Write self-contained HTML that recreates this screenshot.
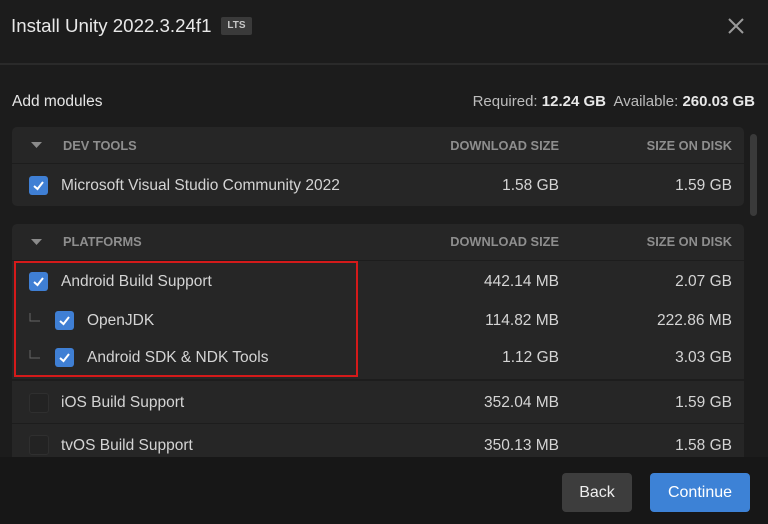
<!DOCTYPE html><html><head><style>
body{margin:0;width:768px;height:524px;background:#1c1c1c;font-family:"Liberation Sans",sans-serif;color:#d6d6d6;position:relative;overflow:hidden}
.a{position:absolute}
.hdr{left:0;top:0;width:768px;height:63px;background:#1c1c1c;border-bottom:2px solid #2a2a2a}
.panel{left:12px;width:732px;background:#262626;border-radius:5px}
.row{position:absolute;left:0;width:732px;border-top:1px solid #1d1d1d}
.h{font-size:12.8px;font-weight:bold;color:#8e8e8e}
.t{font-size:15.5px;color:#d4d4d4}
.cb{position:absolute;width:19px;height:19px;border-radius:3px;background:#3f7fd4}
.cb svg{position:absolute;left:3px;top:3px}
.ecb{position:absolute;width:18px;height:18px;border-radius:3px;border:1px solid #2f2f2f;background:#232323}
.r{position:absolute;text-align:right;font-size:15.5px;color:#d4d4d4}
</style></head><body>
<div class="a hdr"></div>
<div class="a" style="left:11px;top:15px;font-size:18.7px;color:#e8e8e8">Install Unity 2022.3.24f1</div>
<div class="a" style="left:221px;top:17px;width:31px;height:18px;background:#3a3a3a;border-radius:2px;font-size:10px;font-weight:bold;color:#c8c8c8;text-align:center;line-height:18px">LTS</div>
<svg class="a" style="left:727px;top:17px" width="18" height="18"><path d="M2 2L16 16M16 2L2 16" stroke="#9a9a9a" stroke-width="2"/></svg>
<div class="a" style="left:12px;top:93px;font-size:15.5px;color:#e6e6e6">Add modules</div>
<div class="a" style="right:13px;top:93px;font-size:15px;color:#bcbcbc">Required: <b style="color:#e8e8e8;font-weight:bold">12.24 GB</b>&nbsp; Available: <b style="color:#e8e8e8">260.03 GB</b></div>

<div class="a panel" style="top:127px;height:79px">
 <svg class="a" style="left:19px;top:15px" width="11" height="6"><path d="M0 0H11L5.5 6Z" fill="#8a8a8a"/></svg>
 <div class="a h" style="left:51px;top:11px">DEV TOOLS</div>
 <div class="a h" style="right:185px;top:11px">DOWNLOAD SIZE</div>
 <div class="a h" style="right:12px;top:11px">SIZE ON DISK</div>
 <div class="row" style="top:36px;height:43px">
  <div class="cb" style="left:17px;top:12px"><svg width="13" height="13"><path d="M2 7L5.5 10L11 3" stroke="#fff" stroke-width="2" fill="none"/></svg></div>
  <div class="a t" style="left:49px;top:13px">Microsoft Visual Studio Community 2022</div>
  <div class="r" style="right:185px;top:13px">1.58 GB</div>
  <div class="r" style="right:12px;top:13px">1.59 GB</div>
 </div>
</div>
<div class="a" style="left:750px;top:134px;width:7px;height:82px;background:#3a3a3a;border-radius:4px"></div>

<div class="a panel" style="top:224px;height:240px;border-radius:5px 5px 0 0">
 <svg class="a" style="left:19px;top:15px" width="11" height="6"><path d="M0 0H11L5.5 6Z" fill="#8a8a8a"/></svg>
 <div class="a h" style="left:51px;top:10px">PLATFORMS</div>
 <div class="a h" style="right:185px;top:10px">DOWNLOAD SIZE</div>
 <div class="a h" style="right:12px;top:10px">SIZE ON DISK</div>
 <div class="row" style="top:36px;height:117px">
  <div class="cb" style="left:17px;top:11px"><svg width="13" height="13"><path d="M2 7L5.5 10L11 3" stroke="#fff" stroke-width="2" fill="none"/></svg></div>
  <div class="a t" style="left:49px;top:12px">Android Build Support</div>
  <div class="r" style="right:185px;top:12px">442.14 MB</div>
  <div class="r" style="right:12px;top:12px">2.07 GB</div>
  <svg class="a" style="left:17px;top:52px" width="12" height="10"><path d="M1 0V8H11" stroke="#666" fill="none"/></svg>
  <div class="cb" style="left:43px;top:50px"><svg width="13" height="13"><path d="M2 7L5.5 10L11 3" stroke="#fff" stroke-width="2" fill="none"/></svg></div>
  <div class="a t" style="left:75px;top:51px">OpenJDK</div>
  <div class="r" style="right:185px;top:51px">114.82 MB</div>
  <div class="r" style="right:12px;top:51px">222.86 MB</div>
  <svg class="a" style="left:17px;top:89px" width="12" height="10"><path d="M1 0V8H11" stroke="#666" fill="none"/></svg>
  <div class="cb" style="left:43px;top:87px"><svg width="13" height="13"><path d="M2 7L5.5 10L11 3" stroke="#fff" stroke-width="2" fill="none"/></svg></div>
  <div class="a t" style="left:75px;top:88px">Android SDK &amp; NDK Tools</div>
  <div class="r" style="right:185px;top:88px">1.12 GB</div>
  <div class="r" style="right:12px;top:88px">3.03 GB</div>
 </div>
 <div class="row" style="top:155px;height:43px;border-top:2px solid #1d1d1d">
  <div class="ecb" style="left:17px;top:12px"></div>
  <div class="a t" style="left:49px;top:13px">iOS Build Support</div>
  <div class="r" style="right:185px;top:13px">352.04 MB</div>
  <div class="r" style="right:12px;top:13px">1.59 GB</div>
 </div>
 <div class="row" style="top:199px;height:40px">
  <div class="ecb" style="left:17px;top:11px"></div>
  <div class="a t" style="left:49px;top:13px">tvOS Build Support</div>
  <div class="r" style="right:185px;top:13px">350.13 MB</div>
  <div class="r" style="right:12px;top:13px">1.58 GB</div>
 </div>
</div>
<div class="a" style="left:14px;top:261px;width:340px;height:112px;border:2px solid #d41a1a"></div>

<div class="a" style="left:0;top:457px;width:768px;height:67px;background:#171717"></div>
<div class="a" style="left:562px;top:473px;width:70px;height:39px;background:#3d3d3d;border-radius:4px;font-size:16px;color:#eee;text-align:center;line-height:40px">Back</div>
<div class="a" style="left:650px;top:473px;width:100px;height:39px;background:#3d82d6;border-radius:4px;font-size:16px;color:#fff;text-align:center;line-height:40px">Continue</div>
</body></html>
